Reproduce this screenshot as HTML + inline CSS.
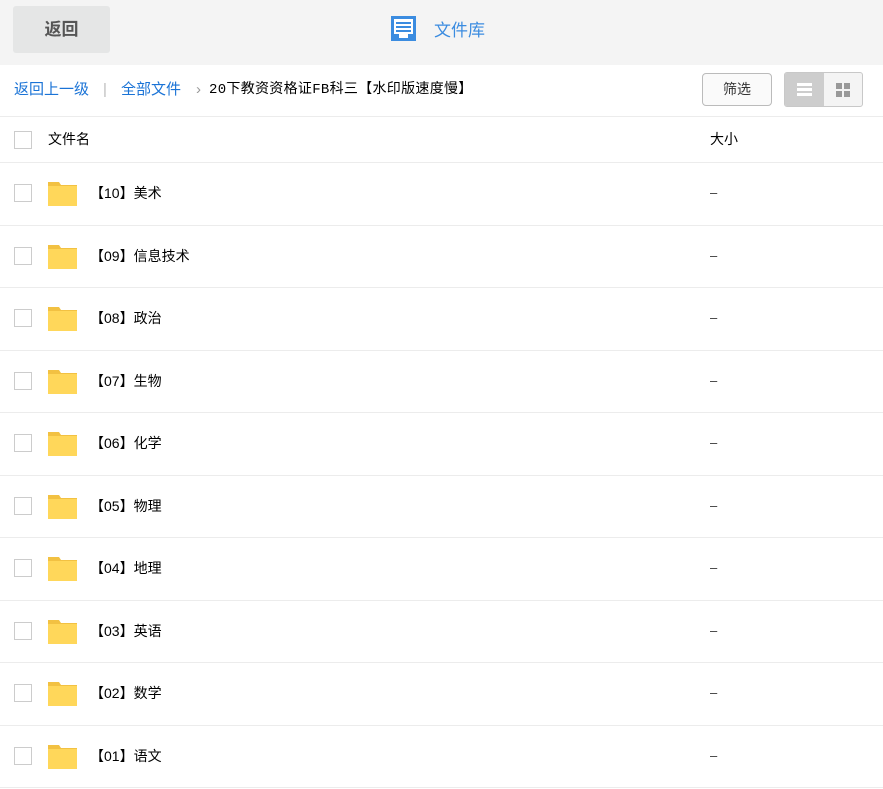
<!DOCTYPE html>
<html><head><meta charset="utf-8"><style>
*{margin:0;padding:0;box-sizing:border-box}
body{width:883px;height:789px;background:#fff;font-family:"Liberation Sans","Noto Sans CJK SC",sans-serif;position:relative;overflow:hidden;color:#000}
.hd{position:absolute;left:0;top:0;width:883px;height:65px;background:#f4f4f4}
.back{position:absolute;left:13px;top:6px;width:97px;height:47px;background:#e5e6e6;border-radius:3px;font-size:17px;font-weight:bold;color:#555;text-align:center;line-height:47px}
.title{position:absolute;left:434px;top:16px;font-size:17px;color:#3b8ce0}
.bc{position:absolute;top:80px;font-size:15px;line-height:20px}
.blue{color:#1a73d6}
.btn{position:absolute;left:702px;top:73px;width:70px;height:33px;border:1px solid #bbb;border-radius:4px;background:#fafafa;font-size:14px;text-align:center;line-height:31px;color:#333}
.tg{position:absolute;left:784px;top:72px;width:79px;height:35px;border:1px solid #c8c8c8;border-radius:3px;overflow:hidden;background:#f4f4f4}
.tg .l{position:absolute;left:0;top:0;width:39px;height:33px;background:#cdcdcd}
.line{position:absolute;left:0;width:883px;height:1px;background:#ececec}
.cb{position:absolute;left:14px;width:18px;height:18px;border:1px solid #ccc;background:#fff}
.t{position:absolute;font-size:14px;line-height:18px}
.fd{position:absolute;left:48px;width:29px;height:26px}
.dash{position:absolute;left:710px;font-size:13px;color:#333}
</style></head><body>
<div class="hd">
<div class="back">返回</div>
<svg style="position:absolute;left:391px;top:16px" width="25" height="25" viewBox="0 0 25 25"><rect width="25" height="25" fill="#3b8ce0"/><rect x="3" y="3" width="19" height="15" fill="#fff"/><rect x="8" y="18" width="9" height="4" fill="#fff"/><rect x="5" y="6" width="15" height="2" fill="#3b8ce0"/><rect x="5" y="10" width="15" height="2" fill="#3b8ce0"/><rect x="5" y="14" width="15" height="2" fill="#3b8ce0"/></svg>
<div class="title">文件库</div>
</div>
<div class="bc blue" style="left:14px">返回上一级</div>
<div class="bc" style="left:103px;color:#bbb">|</div>
<div class="bc blue" style="left:121px">全部文件</div>
<div class="bc" style="left:196px;color:#999">›</div>
<div class="bc" style="left:209px;font-size:14px;font-family:'Liberation Mono','Noto Sans CJK SC',monospace;letter-spacing:0.3px">20下教资资格证FB科三【水印版速度慢】</div>
<div class="btn">筛选</div>
<div class="tg"><div class="l"></div>
<div style="position:absolute;left:12px;top:10px;width:15px;height:3px;background:#fff;box-shadow:0 5px 0 #fff,0 10px 0 #fff"></div>
<div style="position:absolute;left:51px;top:10px;width:6px;height:6px;background:#999;box-shadow:8px 0 0 #999,0 8px 0 #999,8px 8px 0 #999"></div>
</div>
<div class="line" style="top:116px"></div>
<div class="cb" style="top:131px"></div>
<div class="t" style="left:48px;top:130px">文件名</div>
<div class="t" style="left:710px;top:130px">大小</div>
<div class="line" style="top:162px"></div>
<div id="rows"></div>
<script>
var n=["【10】美术","【09】信息技术","【08】政治","【07】生物","【06】化学","【05】物理","【04】地理","【03】英语","【02】数学","【01】语文"];
var h="";
for(var i=0;i<10;i++){var c=193+i*62.5;
h+='<div class="cb" style="top:'+(c-9)+'px"></div>';
h+='<svg class="fd" style="top:'+(c-13)+'px" viewBox="0 0 29 26"><path d="M0 2h11l2 3h16v21H0z" fill="#f2c142"/><rect x="0" y="6" width="29" height="20" fill="#ffd75a"/></svg>';
h+='<div class="t" style="left:90px;top:'+(c-9)+'px">'+n[i]+'</div>';
h+='<div class="dash" style="top:'+(c-8)+'px">–</div>';
h+='<div class="line" style="top:'+(c+31.5)+'px"></div>';}
document.getElementById("rows").innerHTML=h;
</script>
</body></html>
